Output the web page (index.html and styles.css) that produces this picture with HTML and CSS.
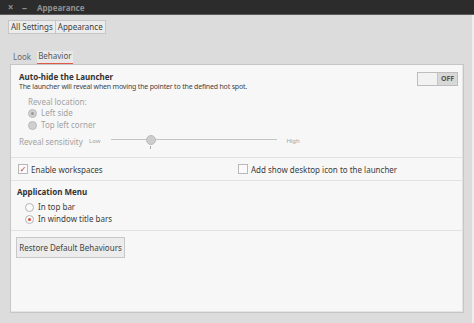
FILE: index.html
```html
<!DOCTYPE html>
<html lang="en">
<head>
    <meta charset="UTF-8">
    <title>Appearance</title>
    <link rel="stylesheet" href="styles.css">
</head>
<body>
    <div class="titlebar">
        <span class="tb-btn">&#215;</span>
        <span class="tb-btn">&#8211;</span>
        <span class="tb-title">Appearance</span>
    </div>

    <div class="window">
        <div class="crumbs">
            <button type="button" class="crumb">All Settings</button>
            <button type="button" class="crumb">Appearance</button>
        </div>

        <div class="tabs">
            <span class="tab">Look</span>
            <span class="tab tab-active">Behavior</span>
        </div>

        <div class="panel">
            <!-- Launcher -->
            <div class="section section-launcher">
                <div class="head-row">
                    <div>
                        <div class="heading">Auto-hide the Launcher</div>
                        <div class="desc">The launcher will reveal when moving the pointer to the defined hot spot.</div>
                    </div>
                    <div class="switch">
                        <span class="switch-knob"></span>
                        <span class="switch-label">OFF</span>
                    </div>
                </div>
                <div class="reveal">
                    <div class="muted">Reveal location:</div>
                    <div class="option muted"><span class="radio radio-dim on"></span>Left side</div>
                    <div class="option muted"><span class="radio radio-dim"></span>Top left corner</div>
                </div>
                <div class="sens-row">
                    <span class="muted sens-label">Reveal sensitivity</span>
                    <span class="muted small">Low</span>
                    <div class="slider">
                        <span class="slider-track"></span>
                        <span class="slider-knob"></span>
                        <span class="slider-tick"></span>
                    </div>
                    <span class="muted small">High</span>
                </div>
            </div>

            <!-- Workspaces -->
            <div class="section section-checks">
                <div class="check-item check-left"><span class="check on">&#10003;</span>Enable workspaces</div>
                <div class="check-item"><span class="check"></span>Add show desktop icon to the launcher</div>
            </div>

            <!-- Application menu -->
            <div class="section section-menu">
                <div class="heading">Application Menu</div>
                <div class="option"><span class="radio"></span>In top bar</div>
                <div class="option"><span class="radio on"></span>In window title bars</div>
            </div>

            <div class="section section-restore">
                <button type="button" class="restore-btn">Restore Default Behaviours</button>
            </div>
        </div>
    </div>
</body>
</html>
```

FILE: styles.css
```css
body {
    margin: 0;
    width: 474px;
    height: 323px;
    overflow: hidden;
    background: #dcdcdc;
    font-family: 'Noto Sans', 'DejaVu Sans', sans-serif;
    color: #3c3c3c;
    font-size: 8px;
}
.titlebar {
    height: 15px;
    background: #2c2c2c;
    border-bottom: 1px solid #5c5c5c;
    display: flex;
    align-items: center;
    padding-left: 7px;
    gap: 7px;
    color: #8e8e8e;
    box-sizing: border-box;
}
.tb-btn {
    font-size: 10px;
    font-weight: bold;
    width: 7px;
    text-align: center;
}
.tb-title {
    margin-left: 2px;
    font-size: 8px;
    font-weight: bold;
    color: #909090;
}
.window {
    padding: 5px 11px 0 8px;
    border-right: 2px solid #efefef;
    height: 308px;
}
.crumbs {
    display: flex;
}
.crumb {
    font-family: inherit;
    font-size: 8px;
    color: #3c3c3c;
    background: #ececec;
    border: 1px solid #c6c6c6;
    height: 14px;
    padding: 0 2px;
    margin: 0 -1px 0 0;
    line-height: 12px;
}
.tabs {
    display: flex;
    gap: 5px;
    margin: 16px 0 0 4px;
    height: 14px;
    align-items: flex-end;
}
.tab {
    font-size: 8px;
    color: #6a6a6a;
    padding: 0 1px 2px;
    line-height: 10px;
}
.tab-active {
    color: #555;
    border-bottom: 1px solid #e0584a;
    background: #e8e8e8;
}
.panel {
    margin-left: 2px;
    width: 452px;
    height: 247px;
    background: #f7f7f7;
    border: 1px solid #c6c6c6;
    box-shadow: inset -1px -1px 0 #e4e4e4;
}
.section {
    border-bottom: 1px solid #e2e2e2;
    box-sizing: border-box;
}
.section-launcher {
    height: 93px;
    padding: 6px 5px 0 8px;
}
.head-row {
    display: flex;
    justify-content: space-between;
}
.heading {
    font-weight: bold;
    font-size: 8px;
    color: #333;
    line-height: 11px;
}
.desc {
    font-size: 7px;
    letter-spacing: -0.18px;
    color: #444;
    line-height: 10px;
}
.switch {
    display: flex;
    width: 39px;
    height: 12px;
    border: 1px solid #bdbdbd;
    margin-top: 1px;
}
.switch-knob {
    width: 19px;
    background: #f2f2f2;
    border-right: 1px solid #c4c4c4;
}
.switch-label {
    flex: 1;
    background: #d8d8d8;
    font-size: 7px;
    font-weight: bold;
    color: #555;
    text-align: center;
    line-height: 12px;
}
.reveal {
    padding: 4px 0 0 9px;
}
.muted {
    color: #a2a2a2;
}
.small {
    font-size: 6px;
}
.option {
    display: flex;
    align-items: center;
    height: 12px;
    line-height: 12px;
}
.reveal .muted:first-child {
    line-height: 11px;
}
.radio {
    width: 7px;
    height: 7px;
    border-radius: 50%;
    border: 1px solid #b4b4b4;
    background: #fafafa;
    margin-right: 4px;
    display: inline-block;
    position: relative;
    flex: none;
}
.radio.on::after {
    content: '';
    position: absolute;
    left: 2px;
    top: 2px;
    width: 3px;
    height: 3px;
    border-radius: 50%;
    background: #dd4a3a;
}
.radio-dim {
    background: #cfcfcf;
    border-color: #bbb;
}
.radio-dim.on::after {
    background: #9a9a9a;
}
.sens-row {
    display: flex;
    align-items: center;
    margin-top: 4px;
    height: 12px;
}
.sens-label {
    width: 70px;
}
.slider {
    position: relative;
    width: 166px;
    height: 12px;
    margin: 0 9px 0 11px;
}
.slider-track {
    position: absolute;
    left: 0;
    right: 0;
    top: 4px;
    height: 1px;
    background: #c4c4c4;
}
.slider-knob {
    position: absolute;
    left: 35px;
    top: 0;
    width: 8px;
    height: 8px;
    border-radius: 50%;
    background: #cdcdcd;
    border: 1px solid #bcbcbc;
}
.slider-tick {
    position: absolute;
    left: 39px;
    top: 11px;
    width: 1px;
    height: 3px;
    background: #aaa;
}
.section-checks {
    height: 23px;
    display: flex;
    align-items: center;
    padding-left: 7px;
}
.check-item {
    display: flex;
    align-items: center;
}
.check-left {
    width: 220px;
}
.check {
    width: 8px;
    height: 8px;
    border: 1px solid #b8b8b8;
    background: #fafafa;
    margin-right: 3px;
    font-size: 8px;
    line-height: 8px;
    text-align: center;
    color: #c9302c;
    font-weight: bold;
}
.section-menu {
    height: 50px;
    padding: 5px 0 0 6px;
}
.section-menu .heading {
    margin-bottom: 4px;
}
.section-menu .option {
    padding-left: 8px;
}
.section-restore {
    border-bottom: none;
    padding: 6px 0 0 5px;
}
.restore-btn {
    font-family: inherit;
    font-size: 8px;
    color: #444;
    background: #ececec;
    border: 1px solid #c8c8c8;
    height: 21px;
    width: 109px;
    padding: 0;
}
```
